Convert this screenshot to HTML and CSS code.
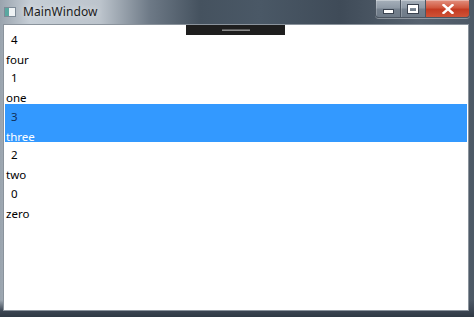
FILE: index.html
```html
<!DOCTYPE html>
<html>
<head>
<meta charset="utf-8">
<link rel="stylesheet" href="styles.css">
</head>
<body>
<div class="window">
  <div class="titlebar">
    <svg class="app-icon" width="12" height="10" viewBox="0 0 12 10">
      <rect x="0.5" y="0.5" width="11" height="9" fill="#f4f6f8" stroke="#7d8a96"/>
      <rect x="1" y="1" width="4" height="8" fill="#5aa7a0"/>
      <rect x="5" y="1" width="6" height="8" fill="#eef2f4"/>
    </svg>
    <span class="title">MainWindow</span>
    <div class="caption-buttons">
      <div class="cbtn min"><span class="min-glyph"></span></div>
      <div class="cbtn max"><span class="max-glyph"></span></div>
      <div class="cbtn close">
        <svg width="12" height="10" viewBox="0 0 12 10"><path d="M1.5 1 L10.5 9 M10.5 1 L1.5 9" stroke="#fff" stroke-width="2.4" stroke-linecap="square"/></svg>
      </div>
    </div>
  </div>
  <div class="client">
    <div class="listbox">
      <div class="item"><div class="num">4</div><div class="word">four</div></div>
      <div class="item"><div class="num">1</div><div class="word">one</div></div>
      <div class="item selected"><div class="num">3</div><div class="word">three</div></div>
      <div class="item"><div class="num">2</div><div class="word">two</div></div>
      <div class="item"><div class="num">0</div><div class="word">zero</div></div>
    </div>
    <div class="debug-bar"><span class="grip"></span></div>
  </div>
</div>
</body>
</html>
```
FILE: styles.css
```css
html, body {
  margin: 0;
  padding: 0;
}
body {
  width: 474px;
  height: 317px;
  overflow: hidden;
  font-family: "Noto Sans", "Open Sans", sans-serif;
}
.window {
  width: 474px;
  height: 317px;
  display: flex;
  flex-direction: column;
  box-sizing: border-box;
  padding: 0 5px 6px 3px;
  background:
    linear-gradient(180deg, rgba(0,0,0,0) 0, rgba(0,0,0,0) 300px, #3b4552 311px, #2f3944 317px),
    linear-gradient(90deg, #9aa4ae 0, #c6ced6 30px, #bcc4cc 100px, #6d7986 150px, #45525f 200px, #4a5866 260px, #3f4b58 340px, #56626f 420px, #4d5966 474px);
}
.titlebar {
  height: 24px;
  display: flex;
  align-items: flex-start;
  flex: none;
}
.app-icon {
  margin: 7px 0 0 1px;
  flex: none;
}
.title {
  margin: 4px 0 0 7px;
  font-size: 12px;
  line-height: 16px;
  color: #1b1b1b;
  letter-spacing: 0.1px;
  text-shadow: 0 0 6px rgba(255,255,255,0.7);
}
.caption-buttons {
  margin-left: auto;
  margin-right: -1px;
  display: flex;
  height: 17px;
  border: 1px solid #4c5662;
  border-top: none;
  border-radius: 0 0 4px 4px;
  overflow: hidden;
  box-shadow: 0 1px 0 rgba(255,255,255,0.35);
}
.cbtn {
  height: 17px;
  display: flex;
  align-items: center;
  justify-content: center;
  box-sizing: border-box;
}
.cbtn.min, .cbtn.max {
  width: 25px;
  background: linear-gradient(180deg, #a6b0ba 0, #8f9aa6 45%, #75818e 55%, #6f7b88 100%);
  border-right: 1px solid #4c5662;
  box-shadow: inset 0 1px 0 rgba(255,255,255,0.35), inset 1px 0 0 rgba(255,255,255,0.2);
}
.cbtn.close {
  width: 43px;
  background: linear-gradient(180deg, #e2907f 0, #d1583f 45%, #c43b22 55%, #cf5337 100%);
  box-shadow: inset 0 1px 0 rgba(255,255,255,0.35);
}
.min-glyph {
  width: 9px;
  height: 3px;
  background: #fff;
  border: 1px solid #3a4350;
  margin-top: 6px;
}
.max-glyph {
  border: 2px solid #fff;
  border-top-width: 3px;
  box-shadow: 0 0 0 1px #3a4350;
  box-sizing: content-box;
  width: 6px;
  height: 3px;
}
.client {
  flex: 1;
  position: relative;
  background: #ffffff;
  border: 1px solid #8a939c;
}
.listbox {
  padding: 1.5px 1px 1px 1px;
}
.item {
  height: 38.5px;
  box-sizing: border-box;
  padding: 5px 0 0 1px;
  font-size: 11.5px;
  line-height: 16px;
  color: #000;
}
.num {
  padding-left: 5px;
  height: 20px;
}
.word {
  height: 16px;
}
.item.selected {
  background: #3399ff;
}
.item.selected .word {
  color: #ffffff;
}
.item.selected .num {
  color: #10305a;
}
.debug-bar {
  position: absolute;
  left: 182px;
  top: 0;
  width: 99px;
  height: 10px;
  background: #1e1e1e;
  display: flex;
  justify-content: center;
  align-items: center;
}
.grip {
  width: 28px;
  height: 2px;
  background: #8a8a8a;
  border-top: 1px solid #5a5a5a;
  box-sizing: border-box;
}
```
